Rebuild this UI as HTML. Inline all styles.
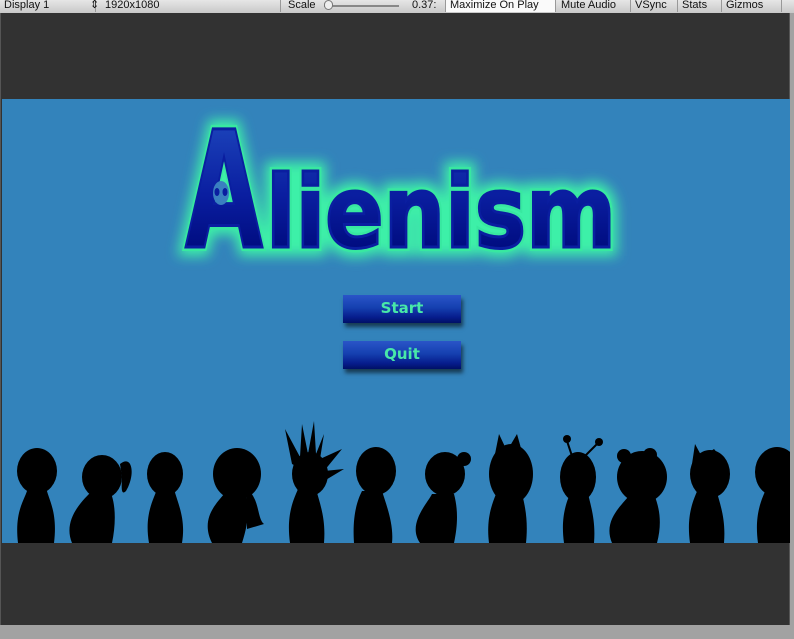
<!DOCTYPE html>
<html><head><meta charset="utf-8"><style>
*{margin:0;padding:0;box-sizing:border-box}
body{width:794px;height:639px;overflow:hidden;background:#a2a2a2;font-family:"Liberation Sans",sans-serif;position:relative}
.tb{position:absolute;top:0;left:0;width:794px;height:13px;background:linear-gradient(#e6e6e6,#c8c8c8);font-size:11px;color:#111;line-height:11px}
.tb span{position:absolute;top:0;height:12px;border-right:1px solid #999;padding-left:4px}
.game{position:absolute;top:13px;left:0;width:790px;height:612px;background:#323232;border-left:1px solid #555;border-right:1px solid #555}
.blue{position:absolute;top:86px;left:1px;width:788px;height:444px;background:#3383bb;overflow:hidden}
.btn{position:absolute;left:341px;width:118px;height:28px;background:linear-gradient(#2a55c8,#1540b0 45%,#061c8c 80%,#001066);box-shadow:2px 4px 4px rgba(0,0,0,.55);color:#48e8a8;font-weight:bold;font-size:15px;text-align:center;line-height:26px;font-family:"DejaVu Sans",sans-serif}
</style></head><body>
<div class="tb">
<span style="left:0;width:96px">Display 1 <span style="border:none;left:86px">⇕</span></span>
<span style="left:101px;width:180px">1920x1080</span>
<span style="left:284px;width:162px">Scale <span style="border:none;left:40px;top:5px;width:75px;height:2px;background:#888;padding:0"></span><span style="border:1px solid #777;left:40px;top:0;width:9px;height:10px;border-radius:5px;background:#eee;padding:0"></span><span style="border:none;left:124px">0.37:</span></span>
<span style="left:446px;width:110px;background:#fafafa">Maximize On Play</span>
<span style="left:557px;width:74px">Mute Audio</span>
<span style="left:631px;width:47px">VSync</span>
<span style="left:678px;width:44px">Stats</span>
<span style="left:722px;width:60px">Gizmos</span>
</div>
<div class="game">
<div class="blue">
<svg width="788" height="444" style="position:absolute;left:0;top:0">
<defs>
<filter id="g" x="-20%" y="-40%" width="140%" height="180%"><feGaussianBlur stdDeviation="6"/></filter>
<linearGradient id="lg" gradientUnits="userSpaceOnUse" x1="0" y1="30" x2="0" y2="150"><stop offset="0" stop-color="#1a40b8"/><stop offset=".55" stop-color="#0a1ea0"/><stop offset="1" stop-color="#000c80"/></linearGradient>
</defs>
<g font-family="DejaVu Sans" font-weight="bold" lengthAdjust="spacingAndGlyphs">
<g fill="#3ef0a8" stroke="#3ef0a8" stroke-width="18" filter="url(#g)">
<text x="183" y="148" font-size="162" textLength="78" lengthAdjust="spacingAndGlyphs">A</text>
<text x="264" y="148" font-size="100" textLength="350" lengthAdjust="spacingAndGlyphs">lienism</text>
</g>
<g fill="#38e8a0" stroke="#38e8a0" stroke-width="8">
<text x="183" y="148" font-size="162" textLength="78" lengthAdjust="spacingAndGlyphs">A</text>
<text x="264" y="148" font-size="100" textLength="350" lengthAdjust="spacingAndGlyphs">lienism</text>
</g>
<g fill="url(#lg)" stroke="#0a1ea0" stroke-width="3">
<text x="183" y="148" font-size="162" textLength="78" lengthAdjust="spacingAndGlyphs">A</text>
<text x="264" y="148" font-size="100" textLength="350" lengthAdjust="spacingAndGlyphs">lienism</text>
</g>
</g>
<ellipse cx="219" cy="94" rx="8" ry="12" fill="#3a80c0"/>
<ellipse cx="215" cy="93" rx="2.5" ry="4" fill="#0a1ea0"/><ellipse cx="223" cy="93" rx="2.5" ry="4" fill="#0a1ea0"/>
<g fill="#000">
<ellipse cx="35" cy="372" rx="20" ry="23"/><path d="M16,444 C12,410 24,400 26,388 L44,388 C46,400 56,412 52,444Z"/>
<ellipse cx="100" cy="378" rx="20" ry="22"/><path d="M118,365 C130,355 134,375 124,392 C118,398 120,384 120,378Z"/><path d="M70,444 C60,420 82,400 90,392 L108,392 C114,405 114,425 110,444Z"/>
<ellipse cx="163" cy="375" rx="18" ry="22"/><path d="M147,444 C142,415 152,400 155,390 L172,390 C176,405 184,420 180,444Z"/>
<ellipse cx="235" cy="375" rx="24" ry="26"/><path d="M245,390 C258,400 255,420 262,425 L245,430Z"/><path d="M210,444 C198,420 214,405 222,395 L244,395 C248,410 246,425 240,444Z"/>
<ellipse cx="308" cy="375" rx="18" ry="22"/><path d="M290,365 L283,330 L298,358 L300,325 L306,355 L312,322 L314,355 L322,335 L318,360 L340,350 L322,372 L342,370 L322,382Z"/><path d="M288,444 C284,415 292,400 296,390 L314,390 C318,405 324,420 322,444Z"/>
<ellipse cx="374" cy="372" rx="20" ry="24"/><path d="M352,444 C350,415 356,400 360,392 L380,392 C384,405 392,425 390,444Z"/>
<ellipse cx="443" cy="375" rx="20" ry="22"/><circle cx="462" cy="360" r="7"/><path d="M418,444 C405,425 425,405 430,395 L452,395 C456,410 456,425 452,444Z"/>
<ellipse cx="509" cy="375" rx="22" ry="30"/><path d="M492,360 L497,335 L505,352 L515,335 L522,360Z"/><path d="M487,444 C484,420 490,405 494,395 L520,395 C524,410 526,425 524,444Z"/>
<ellipse cx="576" cy="378" rx="18" ry="25"/><path d="M570,357 L565,342 M583,357 L595,345" stroke="#000" stroke-width="2"/><circle cx="565" cy="340" r="4"/><circle cx="597" cy="343" r="4"/><path d="M562,444 C558,415 566,400 570,390 L585,390 C588,405 594,420 592,444Z"/>
<ellipse cx="640" cy="378" rx="25" ry="26"/><circle cx="622" cy="357" r="7"/><circle cx="648" cy="356" r="7"/><path d="M610,444 C600,420 622,405 628,395 L652,395 C658,410 660,425 655,444Z"/>
<ellipse cx="708" cy="375" rx="20" ry="24"/><path d="M690,365 L693,345 L700,358 L712,350 L722,362Z"/><path d="M688,444 C684,415 692,400 696,390 L714,390 C718,405 724,420 722,444Z"/>
<ellipse cx="775" cy="373" rx="22" ry="25"/><path d="M756,444 C752,415 760,400 764,390 L788,390 L788,444Z"/>
</g>
</svg>
<div class="btn" style="top:196px">Start</div>
<div class="btn" style="top:242px">Quit</div>
</div>
</div>
</body></html>
